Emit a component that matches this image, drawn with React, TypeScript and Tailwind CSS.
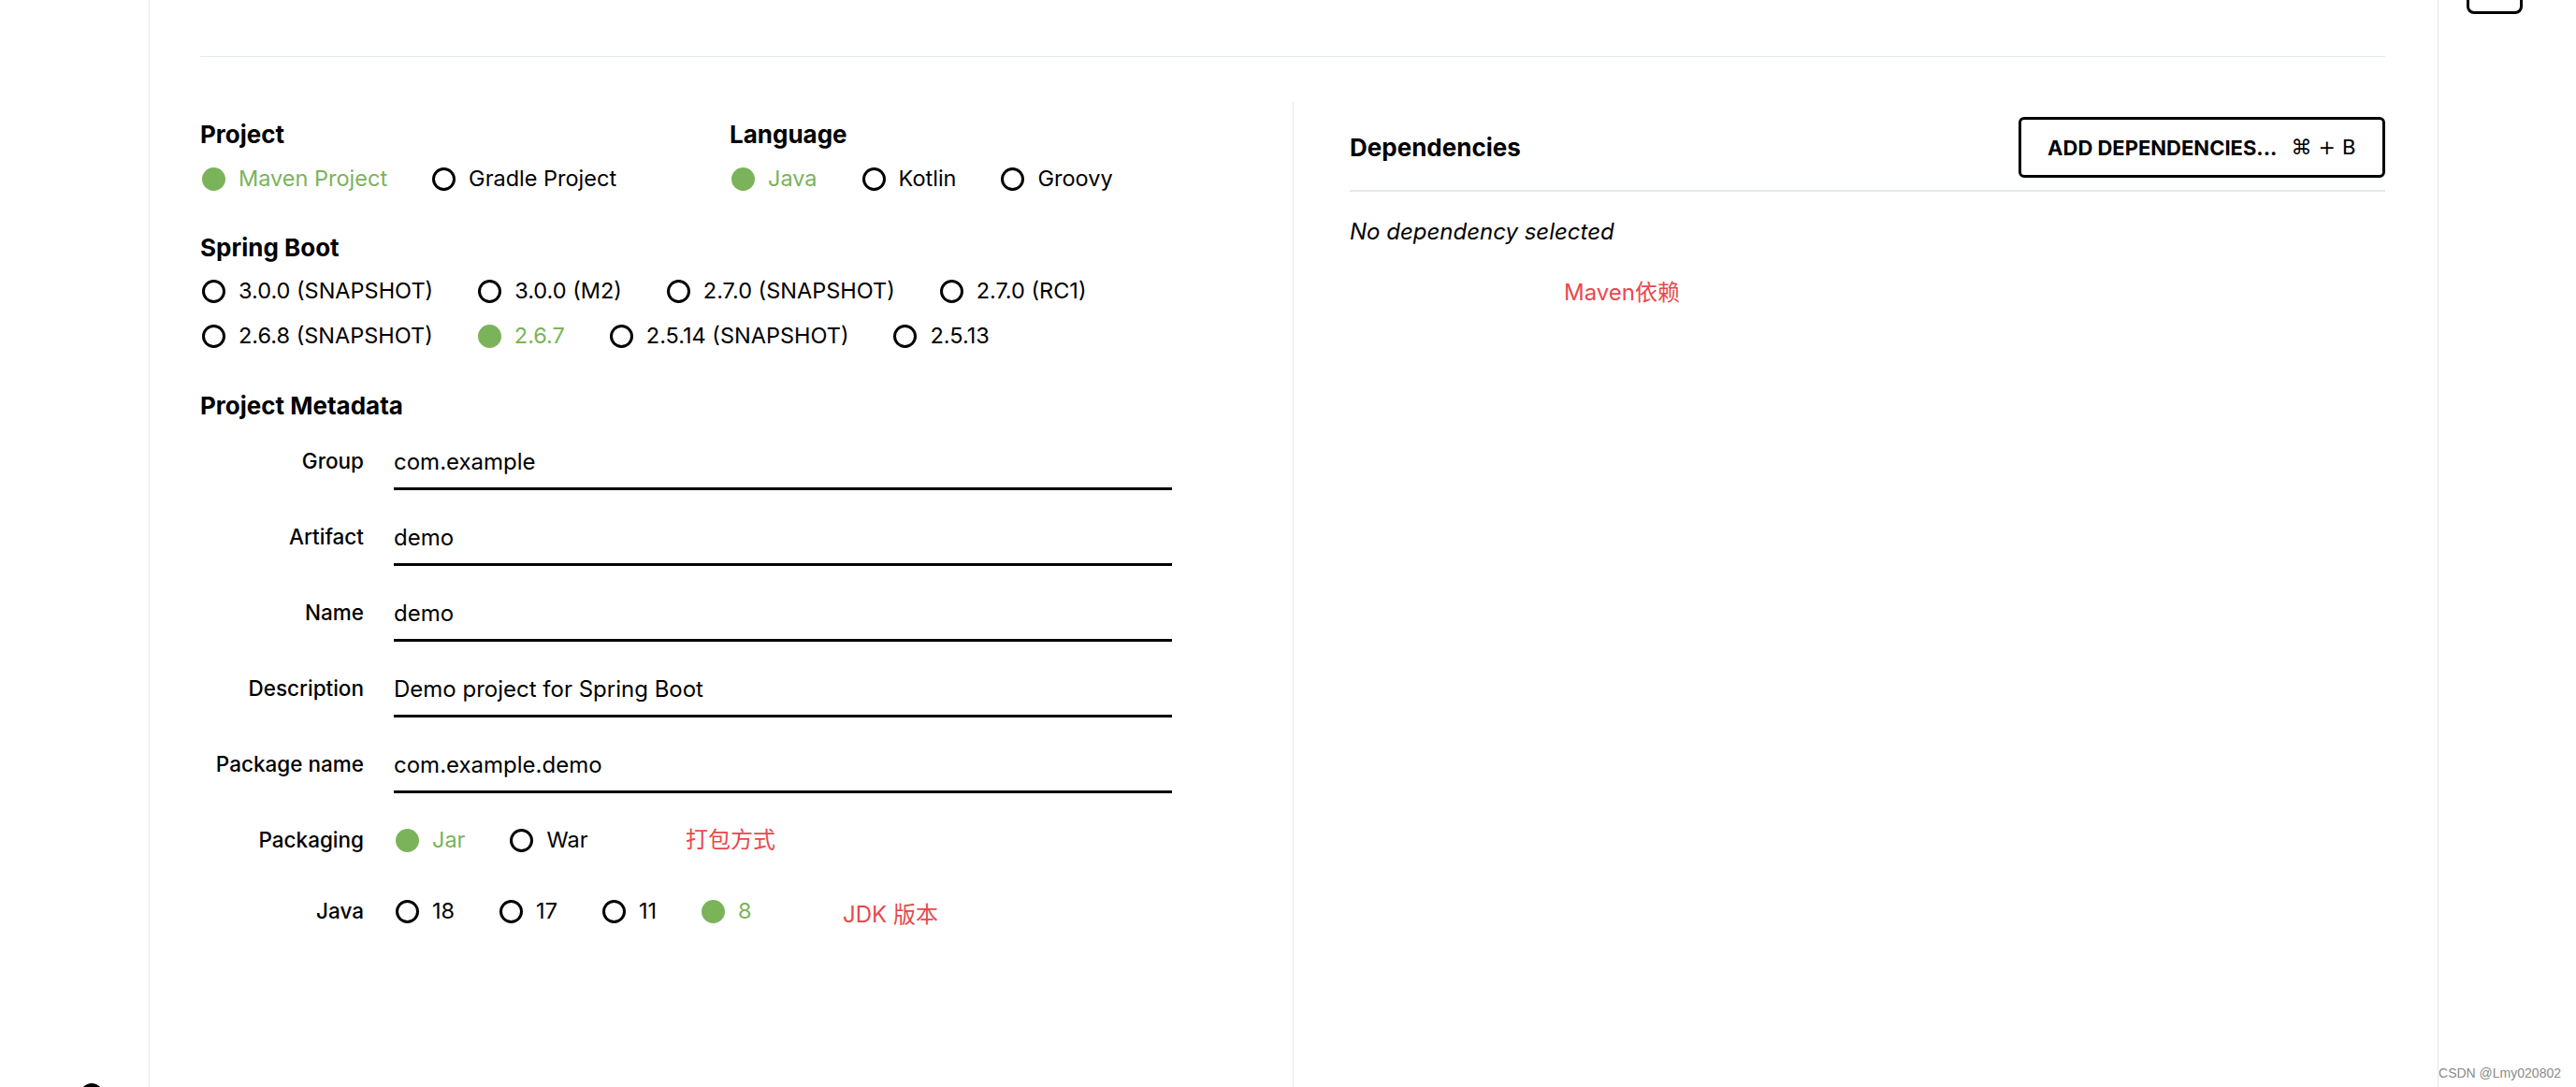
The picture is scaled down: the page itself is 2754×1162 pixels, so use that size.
import React from "react";

// Radio option shape
interface Option {
  label: string;
  checked?: boolean;
}

const projectOptions: Option[] = [
  { label: "Maven Project", checked: true },
  { label: "Gradle Project" },
];

const languageOptions: Option[] = [
  { label: "Java", checked: true },
  { label: "Kotlin" },
  { label: "Groovy" },
];

const bootRow1: Option[] = [
  { label: "3.0.0 (SNAPSHOT)" },
  { label: "3.0.0 (M2)" },
  { label: "2.7.0 (SNAPSHOT)" },
  { label: "2.7.0 (RC1)" },
];

const bootRow2: Option[] = [
  { label: "2.6.8 (SNAPSHOT)" },
  { label: "2.6.7", checked: true },
  { label: "2.5.14 (SNAPSHOT)" },
  { label: "2.5.13" },
];

const packagingOptions: Option[] = [{ label: "Jar", checked: true }, { label: "War" }];

const javaOptions: Option[] = [
  { label: "18" },
  { label: "17" },
  { label: "11" },
  { label: "8", checked: true },
];

const metadata = [
  { label: "Group", value: "com.example" },
  { label: "Artifact", value: "demo" },
  { label: "Name", value: "demo" },
  { label: "Description", value: "Demo project for Spring Boot" },
  { label: "Package name", value: "com.example.demo" },
];

const Radio: React.FC<Option> = ({ label, checked }) => (
  <label className="flex items-center gap-[14px] h-[32px] cursor-pointer">
    <span
      className={
        checked
          ? "w-[25px] h-[25px] rounded-full bg-[#7bb35a] shrink-0"
          : "w-[25px] h-[25px] rounded-full border-[3px] border-black shrink-0"
      }
    />
    <span className={checked ? "text-[#7bb35a]" : "text-black"}>{label}</span>
  </label>
);

const RadioRow: React.FC<{ options: Option[] }> = ({ options }) => (
  <div className="flex items-center gap-[48px] text-[23.5px]">
    {options.map((o) => (
      <Radio key={o.label} {...o} />
    ))}
  </div>
);

const Heading: React.FC<{ children: React.ReactNode }> = ({ children }) => (
  <h2 className="h-[32px] leading-[32px] text-[26px] font-bold text-black">{children}</h2>
);

const FieldLabel: React.FC<{ children: React.ReactNode }> = ({ children }) => (
  <span className="w-[175px] shrink-0 text-right text-[22.5px] font-medium">{children}</span>
);

const App: React.FC = () => {
  return (
    <div className="relative flex h-screen w-full overflow-hidden bg-white font-['Inter','Noto_Sans_CJK_SC',sans-serif] text-[24px] leading-[32px] text-black">
      {/* Left rail */}
      <aside className="flex w-[160px] shrink-0 flex-col justify-end border-r border-[#e2e9eb]">
        <div className="ml-[86px] mb-[-20px] h-[24px] w-[24px] rounded-full bg-black" />
      </aside>

      {/* Main area */}
      <main className="flex w-[2447px] shrink-0 flex-col border-r border-[#e2e9eb] pl-[54px] pr-[56px]">
        <div className="h-[61px] shrink-0 border-b border-[#e2e9eb]" />

        <div className="flex flex-1 pt-[48px]">
          {/* Left column: options */}
          <section className="w-[1169px] shrink-0 border-r border-[#e2e9eb] pt-[19px]">
            <div className="flex">
              <div className="w-[566px]">
                <Heading>Project</Heading>
                <div className="mt-[15px] ml-[2px]">
                  <RadioRow options={projectOptions} />
                </div>
              </div>
              <div>
                <Heading>Language</Heading>
                <div className="mt-[15px] ml-[2px]">
                  <RadioRow options={languageOptions} />
                </div>
              </div>
            </div>

            <div className="mt-[42px]">
              <Heading>Spring Boot</Heading>
              <div className="mt-[14px] ml-[2px] flex flex-col gap-[16px]">
                <RadioRow options={bootRow1} />
                <RadioRow options={bootRow2} />
              </div>
            </div>

            <div className="mt-[43px]">
              <Heading>Project Metadata</Heading>
              <div className="mt-[27px] flex flex-col gap-[34px]">
                {metadata.map(({ label, value }) => (
                  <div key={label} className="flex items-start gap-[32px]">
                    <FieldLabel>{label}</FieldLabel>
                    <input
                      readOnly
                      value={value}
                      className="h-[47px] w-[832px] border-b-[3px] border-black pb-[12px] text-[24px] leading-[32px] text-black outline-none"
                    />
                  </div>
                ))}
              </div>

              <div className="mt-[34px] flex items-center gap-[32px]">
                <FieldLabel>Packaging</FieldLabel>
                <div className="flex items-center">
                  <div className="w-[312px] pl-[2px]">
                    <RadioRow options={packagingOptions} />
                  </div>
                  <span className="text-[#e8494d]">打包方式</span>
                </div>
              </div>

              <div className="mt-[40px] flex items-center gap-[32px]">
                <FieldLabel>Java</FieldLabel>
                <div className="flex items-center">
                  <div className="w-[480px] pl-[2px]">
                    <RadioRow options={javaOptions} />
                  </div>
                  <span className="mt-[8px] text-[#e8494d]">JDK 版本</span>
                </div>
              </div>
            </div>
          </section>

          {/* Right column: dependencies */}
          <section className="flex-1 pl-[60px] pt-[16px]">
            <div className="flex items-center justify-between border-b-2 border-[#e2e9eb] pb-[13px]">
              <h2 className="text-[26px] font-bold">Dependencies</h2>
              <button
                type="button"
                className="flex h-[65px] w-[392px] items-center justify-center gap-[15px] rounded-md border-[3px] border-black text-[22px] font-bold uppercase"
              >
                <span>Add dependencies...</span>
                <span className="font-['DejaVu_Sans','Inter',sans-serif] font-normal">⌘ + B</span>
              </button>
            </div>
            <p className="mt-[27px] italic">No dependency selected</p>
            <p className="mt-[33px] ml-[229px] text-[#e8494d]">Maven依赖</p>
          </section>
        </div>
      </main>

      {/* Right rail */}
      <aside className="flex-1 pl-[30px]">
        <div className="mt-[-45px] flex h-[60px] w-[60px] flex-col items-center justify-end rounded-lg border-[3px] border-black pb-[12px]">
          <span className="h-[8px] w-[8px] rounded-sm bg-black" />
        </div>
      </aside>

      {/* Watermark */}
      <span className="absolute bottom-[7px] right-[16px] font-['Liberation_Sans',sans-serif] text-[14px] leading-[16px] text-[#8a8a8a]">
        CSDN @Lmy020802
      </span>
    </div>
  );
};

export default App;
